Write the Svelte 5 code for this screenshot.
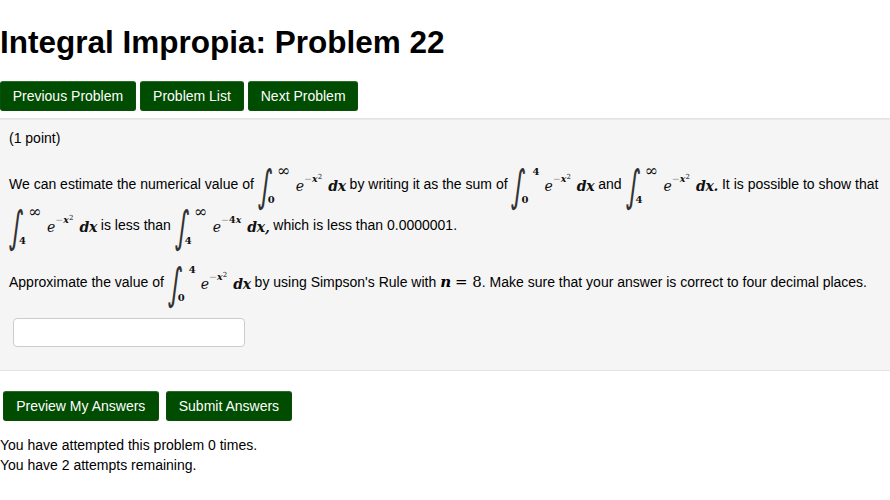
<script>
  const btnsTop = ['Previous Problem', 'Problem List', 'Next Problem'];
  const btnsBottom = ['Preview My Answers', 'Submit Answers'];
</script>

{#snippet integral(lo, hi, exp, tail = '')}
  <span class="math">
    <span class="int">∫</span>
    <span class="limits" class:inf={hi === '∞'}><span class="hi">{hi}</span><span class="lo">{lo}</span></span>
    <i class="e">e</i><span class="exp"><span class="minus">−</span>{@render exp()}</span>
    <b class="dx">dx{tail}</b>
  </span>
{/snippet}

{#snippet xsq()}<b><i>x</i></b><sup>2</sup>{/snippet}
{#snippet fourx()}<b>4<i>x</i></b>{/snippet}

<h1>Integral Impropia: Problem 22</h1>

<div class="btns top">
  {#each btnsTop as b}
    <a class="btn" href="#top">{b}</a>
  {/each}
</div>

<div class="well">
  <div class="point">(1 point)</div>
  <p class="para">
    We can estimate the numerical value of {@render integral('0', '∞', xsq)} by writing it as the sum of {@render integral('0', '4', xsq)} and {@render integral('4', '∞', xsq, '.')} It is possible to show that {@render integral('4', '∞', xsq)} is less than {@render integral('4', '∞', fourx, ',')} which is less than 0.0000001.
  </p>
  <p class="para last">
    Approximate the value of {@render integral('0', '4', xsq)} by using Simpson's Rule with <span class="nvar">n</span> <span class="eq">= 8</span>. Make sure that your answer is correct to four decimal places.
  </p>
  <input class="answer" type="text" />
</div>

<div class="btns bottom">
  {#each btnsBottom as b}
    <button class="btn" type="button">{b}</button>
  {/each}
</div>

<div class="status">
  <div>You have attempted this problem 0 times.</div>
  <div>You have 2 attempts remaining.</div>
</div>

<style>
  :global(body) {
    margin: 0;
    background: #fff;
    color: #000;
    font-family: "Liberation Sans", Arial, sans-serif;
    font-size: 14px;
    line-height: 20px;
  }

  h1 {
    margin: 0;
    padding-top: 22px;
    font-size: 31.5px;
    line-height: 40px;
    font-weight: bold;
  }

  .btns {
    display: flex;
  }

  .top {
    margin-top: 19px;
    gap: 4.5px;
  }

  .bottom {
    margin: 20px 0 0 3px;
    gap: 7px;
  }

  .btn {
    display: block;
    box-sizing: border-box;
    height: 30px;
    padding: 0 12.2px;
    background: #004c00;
    border: 1px solid #0b4d0b;
    border-top-color: #2c6b2c;
    border-radius: 3px;
    color: #fff;
    font: 14px/28px "Liberation Sans", Arial, sans-serif;
    text-decoration: none;
  }

  .top .btn {
    padding: 0 11.7px;
  }

  .well {
    margin-top: 7px;
    padding: 9px 9px 23px;
    height: 253px;
    box-sizing: border-box;
    background: #f5f5f5;
    border-top: 1px solid #e3e3e3;
    border-bottom: 1px solid #e3e3e3;
    box-shadow: inset 0 1px 1px rgba(0, 0, 0, 0.05);
  }

  .point {
    height: 20px;
  }

  .para {
    margin: 0;
    padding-top: 17px;
  }

  .para.last {
    padding-top: 16px;
  }

  .math {
    display: inline-flex;
    align-items: center;
    vertical-align: middle;
    height: 41px;
    font-family: "DejaVu Serif", serif;
    color: #111;
  }

  .int {
    display: inline-block;
    font-family: "DejaVu Sans", sans-serif;
    font-size: 30px;
    line-height: 41px;
    width: 10px;
    color: #333;
    transform: scale(0.85, 1.45) skewX(-10deg);
  }

  .limits {
    display: flex;
    flex-direction: column;
    justify-content: space-between;
    height: 39px;
    width: 23px;
    font-size: 10px;
    line-height: 11px;
    font-weight: bold;
  }

  .limits.inf {
    width: 28px;
  }

  .hi {
    padding-left: 11px;
  }

  .inf .hi {
    font-size: 16px;
    font-weight: normal;
    line-height: 9px;
    padding-left: 9px;
  }

  .e {
    font-size: 14px;
  }

  .exp {
    align-self: flex-start;
    margin-top: 8px;
    font-size: 9.5px;
    line-height: 12px;
    white-space: nowrap;
  }

  .minus {
    color: #999;
  }

  .exp sup {
    font-size: 7px;
    line-height: 0;
    vertical-align: 3px;
  }

  .dx {
    margin-left: 6px;
    font-size: 14px;
    font-style: italic;
    letter-spacing: -0.3px;
  }

  .nvar {
    font: italic bold 15px "DejaVu Serif", serif;
  }

  .eq {
    font: 15px "DejaVu Serif", serif;
  }

  .answer {
    display: block;
    box-sizing: border-box;
    width: 232px;
    height: 29px;
    margin: 14px 0 0 4px;
    background: #fff;
    border: 1px solid #ccc;
    border-radius: 4px;
  }

  .status {
    margin-top: 14px;
  }
</style>
